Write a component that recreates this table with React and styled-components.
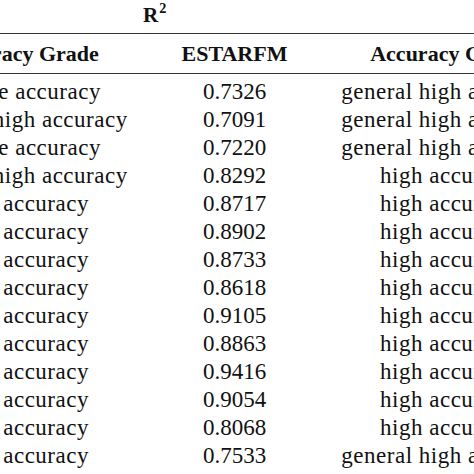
import React from 'react'
import styled, { createGlobalStyle } from 'styled-components'

const GlobalStyle = createGlobalStyle`
    html, body {
        margin: 0;
        padding: 0;
        background: #ffffff;
        overflow: hidden;
    }
`

const PageWrapper = styled.div`
    width: 474px;
    height: 474px;
    overflow: hidden;
    color: #111111;
    font-family: "Liberation Serif", "Times New Roman", serif;
`

const Table = styled.div`
    display: grid;
    grid-template-columns: repeat(3, 213px);
    margin-left: -85px;
    width: 639px;
`

const TitleCell = styled.div`
    grid-column: 1 / -1;
    padding: 3px 0 6px 228px;
    font-size: 21px;
    font-weight: 700;
    line-height: 24px;
    border-bottom: 1px solid #333;
`

const Sup = styled.sup`
    font-size: 0.68em;
    line-height: 0;
    vertical-align: 0.6em;
    margin-left: 1px;
`

const HeadCell = styled.div`
    padding: 6px 0 5px;
    font-size: 22px;
    font-weight: 700;
    line-height: 28px;
    text-align: center;
    white-space: nowrap;
    border-bottom: 1px solid #333;
`

const Cell = styled.div`
    padding-top: ${props => (props.first ? '4px' : '0')};
    font-size: 23px;
    line-height: 28px;
    text-align: center;
    white-space: nowrap;
    letter-spacing: ${props => (props.grade ? '0.5px' : '0')};
`

const rows = [
    ['middle accuracy', '0.7326', 'general high accuracy'],
    ['general high accuracy', '0.7091', 'general high accuracy'],
    ['middle accuracy', '0.7220', 'general high accuracy'],
    ['general high accuracy', '0.8292', 'high accuracy'],
    ['high accuracy', '0.8717', 'high accuracy'],
    ['high accuracy', '0.8902', 'high accuracy'],
    ['high accuracy', '0.8733', 'high accuracy'],
    ['high accuracy', '0.8618', 'high accuracy'],
    ['high accuracy', '0.9105', 'high accuracy'],
    ['high accuracy', '0.8863', 'high accuracy'],
    ['high accuracy', '0.9416', 'high accuracy'],
    ['high accuracy', '0.9054', 'high accuracy'],
    ['high accuracy', '0.8068', 'high accuracy'],
    ['high accuracy', '0.7533', 'general high accuracy'],
]

const App = () => {
    return (
        <PageWrapper>
            <GlobalStyle />
            <Table>
                <TitleCell>
                    R<Sup>2</Sup>
                </TitleCell>

                <HeadCell>Accuracy Grade</HeadCell>
                <HeadCell>ESTARFM</HeadCell>
                <HeadCell>Accuracy Grade</HeadCell>

                {rows.map((row, i) => (
                    <React.Fragment key={i}>
                        <Cell first={i === 0} grade>{row[0]}</Cell>
                        <Cell first={i === 0}>{row[1]}</Cell>
                        <Cell first={i === 0} grade>{row[2]}</Cell>
                    </React.Fragment>
                ))}
            </Table>
        </PageWrapper>
    )
}

export default App
